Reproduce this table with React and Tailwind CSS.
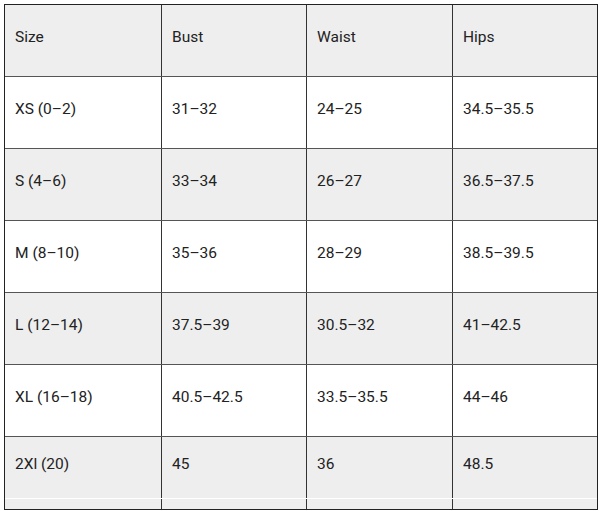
import React from "react";

const rows = [
  ["Size", "Bust", "Waist", "Hips"],
  ["XS (0–2)", "31–32", "24–25", "34.5–35.5"],
  ["S (4–6)", "33–34", "26–27", "36.5–37.5"],
  ["M (8–10)", "35–36", "28–29", "38.5–39.5"],
  ["L (12–14)", "37.5–39", "30.5–32", "41–42.5"],
  ["XL (16–18)", "40.5–42.5", "33.5–35.5", "44–46"],
  ["2Xl (20)", "45", "36", "48.5"],
];

export default function App() {
  return (
    <div className="w-[600px] h-[511px] bg-white pt-[4px] pl-[4px]" style={{ fontFamily: "Roboto, 'Liberation Sans', sans-serif" }}>
      <div className="w-[594px] h-[506px] border border-[#222] overflow-hidden flex flex-col">
        {rows.map((r, i) => {
          const last = i === rows.length - 1;
          return (
            <div
              key={i}
              className={`grid grid-cols-[157px_145px_146px_1fr] shrink-0 ${i % 2 === 0 ? "bg-[#eeeeee]" : "bg-white"} ${last ? "h-[62px] border-b border-white" : "h-[72px] border-b border-[#555]"}`}
            >
              {r.map((c, j) => (
                <div
                  key={j}
                  className={`flex items-center pl-[10px] pb-[5px] text-[15.5px] text-[#222] ${j < 3 ? "border-r border-[#333]" : ""}`}
                >
                  {c}
                </div>
              ))}
            </div>
          );
        })}
        <div className="grid grid-cols-[157px_145px_146px_1fr] flex-1 bg-[#eeeeee]">
          <div className="border-r border-[#333]" />
          <div className="border-r border-[#333]" />
          <div className="border-r border-[#333]" />
          <div />
        </div>
      </div>
    </div>
  );
}
